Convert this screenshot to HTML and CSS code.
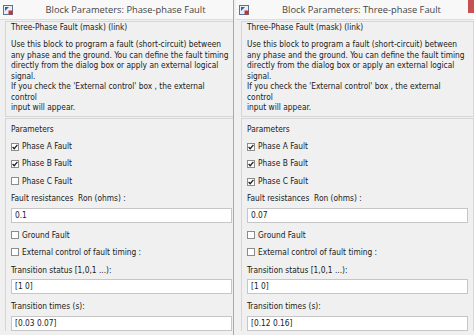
FILE: index.html
```html
<!DOCTYPE html>
<html lang="en">
<head>
  <meta charset="UTF-8" />
  <title>Block Parameters</title>
  <link rel="stylesheet" href="styles.css">
</head>
<body>
  <div class="screen">

    <div class="dialog dialog-left">
      <div class="inner">
        <div class="titlebar">
          <svg class="icon" width="10" height="10" viewBox="0 0 10 10">
            <rect x="0.5" y="0.5" width="9" height="9" fill="#e8eef6" stroke="#5a7398"/>
            <path d="M2 2 H6 L2 6 Z" fill="#2f5fa8"/>
            <rect x="5.5" y="5.5" width="4" height="4" fill="#c8322c"/>
          </svg>
          <span class="title">Block Parameters: Phase-phase Fault</span>
          <span class="spacer"></span>
        </div>
        <div class="body">
          <div class="group desc">
            <div class="group-title">Three-Phase Fault (mask) (link)</div>
            <p class="desc-text">Use this block to program a fault (short-circuit) between<br>any phase and the ground. You can define the fault timing<br>directly from the dialog box or apply an external logical<br>signal.<br>If you check the 'External control' box , the external<br>control<br>input will appear.</p>
          </div>
          <div class="group params">
            <div class="group-title">Parameters</div>
            <div class="check"><span class="box"><svg width="6" height="6" viewBox="0 0 6 6"><path d="M0.6 3 L2.2 4.7 L5.4 0.9" fill="none" stroke="#1e1e1e" stroke-width="1.3"/></svg></span>Phase A Fault</div>
            <div class="check"><span class="box"><svg width="6" height="6" viewBox="0 0 6 6"><path d="M0.6 3 L2.2 4.7 L5.4 0.9" fill="none" stroke="#1e1e1e" stroke-width="1.3"/></svg></span>Phase B Fault</div>
            <div class="check"><span class="box"></span>Phase C Fault</div>
            <div class="label">Fault resistances&nbsp; Ron (ohms) :</div>
            <div class="input">0.1</div>
            <div class="check"><span class="box"></span>Ground Fault</div>
            <div class="check"><span class="box"></span>External control of fault timing :</div>
            <div class="label">Transition status [1,0,1 ...):</div>
            <div class="input">[1 0]</div>
            <div class="label">Transition times (s):</div>
            <div class="input">[0.03 0.07]</div>
          </div>
        </div>
      </div>
    </div>

    <div class="dialog dialog-right">
      <div class="inner">
        <div class="titlebar">
          <svg class="icon" width="10" height="10" viewBox="0 0 10 10">
            <rect x="0.5" y="0.5" width="9" height="9" fill="#e8eef6" stroke="#5a7398"/>
            <path d="M2 2 H6 L2 6 Z" fill="#2f5fa8"/>
            <rect x="5.5" y="5.5" width="4" height="4" fill="#c8322c"/>
          </svg>
          <span class="title">Block Parameters: Three-phase Fault</span>
          <span class="close"></span>
        </div>
        <div class="body">
          <div class="group desc">
            <div class="group-title">Three-Phase Fault (mask) (link)</div>
            <p class="desc-text">Use this block to program a fault (short-circuit) between<br>any phase and the ground. You can define the fault timing<br>directly from the dialog box or apply an external logical<br>signal.<br>If you check the 'External control' box , the external<br>control<br>input will appear.</p>
          </div>
          <div class="group params">
            <div class="group-title">Parameters</div>
            <div class="check"><span class="box"><svg width="6" height="6" viewBox="0 0 6 6"><path d="M0.6 3 L2.2 4.7 L5.4 0.9" fill="none" stroke="#1e1e1e" stroke-width="1.3"/></svg></span>Phase A Fault</div>
            <div class="check"><span class="box"><svg width="6" height="6" viewBox="0 0 6 6"><path d="M0.6 3 L2.2 4.7 L5.4 0.9" fill="none" stroke="#1e1e1e" stroke-width="1.3"/></svg></span>Phase B Fault</div>
            <div class="check"><span class="box"><svg width="6" height="6" viewBox="0 0 6 6"><path d="M0.6 3 L2.2 4.7 L5.4 0.9" fill="none" stroke="#1e1e1e" stroke-width="1.3"/></svg></span>Phase C Fault</div>
            <div class="label">Fault resistances&nbsp; Ron (ohms) :</div>
            <div class="input">0.07</div>
            <div class="check"><span class="box"></span>Ground Fault</div>
            <div class="check"><span class="box"></span>External control of fault timing :</div>
            <div class="label">Transition status [1,0,1 ...):</div>
            <div class="input">[1 0]</div>
            <div class="label">Transition times (s):</div>
            <div class="input">[0.12 0.16]</div>
          </div>
        </div>
      </div>
    </div>

  </div>
</body>
</html>
```

FILE: styles.css
```css
body {
  margin: 0;
  background: #f0f0f0;
  font-family: "DejaVu Sans", sans-serif;
  font-stretch: condensed;
  font-size: 8.3px;
  color: #1a1a1a;
}

.screen {
  display: flex;
  height: 335px;
  overflow: hidden;
}

.dialog {
  overflow: hidden;
  background: #f0f0f0;
}

.dialog-left {
  width: 233px;
}

.dialog-right {
  flex: 1;
  border-left: 1px solid #a9a9a9;
  padding-left: 2px;
}

.inner {
  width: 240px;
}

.titlebar {
  height: 20px;
  box-sizing: border-box;
  border-bottom: 1px solid #dcdcdc;
  background: #f8f8f8;
  display: flex;
  align-items: center;
  padding-left: 3px;
}

.icon {
  flex: none;
}

.title {
  flex: 1;
  padding-left: 6px;
  text-align: center;
  font-family: "Open Sans", sans-serif;
  font-stretch: normal;
  font-size: 9.3px;
  color: #444;
  white-space: nowrap;
}

.spacer,
.close {
  flex: none;
  width: 8px;
  height: 13px;
  align-self: flex-start;
}

.close {
  background: #c75050;
}

.body {
  padding: 1px 2px 0 5px;
}

.group {
  border: 1px solid #d6d6d6;
  padding: 0 5px;
}

.desc {
  padding-bottom: 3px;
  margin-bottom: 1px;
}

.desc .group-title {
  line-height: 10px;
}

.desc-text {
  margin: 7px 0 0;
  line-height: 10.5px;
  white-space: nowrap;
}

.params {
  padding-top: 2px;
  border-bottom: none;
}

.params .group-title {
  line-height: 17px;
}

.check,
.label {
  line-height: 17.5px;
  white-space: nowrap;
}

.box {
  display: inline-flex;
  align-items: center;
  justify-content: center;
  width: 8px;
  height: 8px;
  box-sizing: border-box;
  border: 1px solid #8c8c8c;
  background: #fff;
  margin-right: 3px;
  vertical-align: -1px;
}

.input {
  height: 15px;
  box-sizing: border-box;
  border: 1px solid #c6c6c6;
  background: #fff;
  padding-left: 3px;
  line-height: 13px;
  margin-bottom: 4px;
}
```
